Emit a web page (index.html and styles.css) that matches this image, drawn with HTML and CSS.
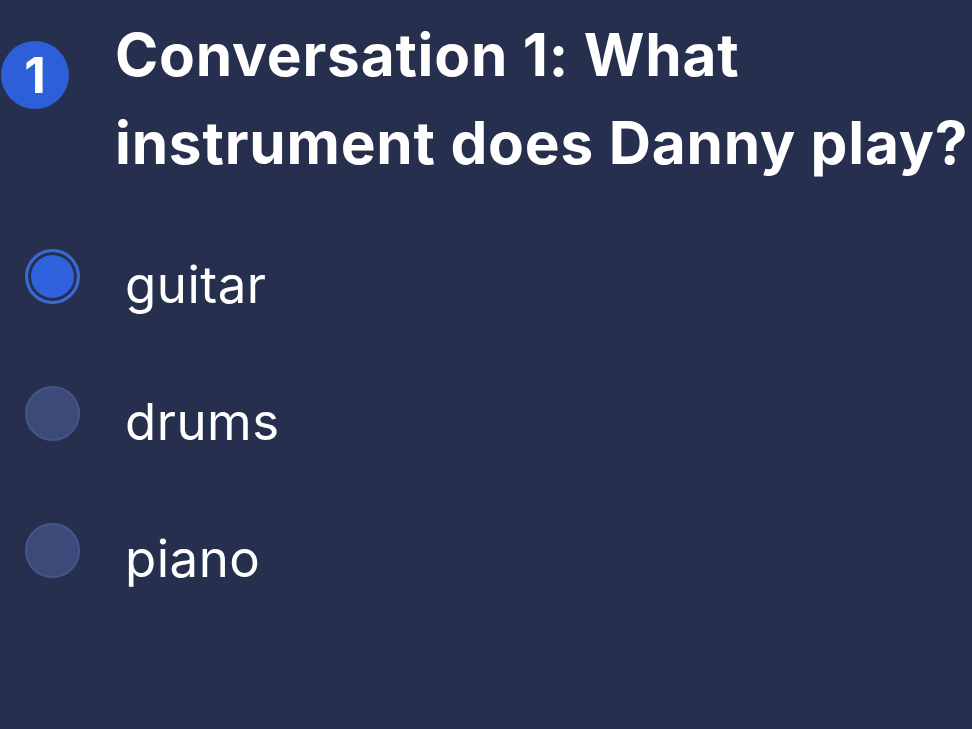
FILE: index.html
```html
<!DOCTYPE html>
<html lang="en">
<head>
    <meta charset="UTF-8">
    <meta name="viewport" content="width=device-width, initial-scale=1.0">
    <title>Quiz</title>
    <link rel="stylesheet" href="styles.css">
</head>
<body>
    <div class="question">
        <div class="question-head">
            <div class="badge">1</div>
            <h1 class="question-title">Conversation 1: What instrument does Danny play?</h1>
        </div>

        <div class="options">
            <label class="option">
                <span class="radio selected"></span>
                <span class="option-text">guitar</span>
            </label>
            <label class="option">
                <span class="radio"></span>
                <span class="option-text">drums</span>
            </label>
            <label class="option">
                <span class="radio"></span>
                <span class="option-text">piano</span>
            </label>
        </div>
    </div>
</body>
</html>
```

FILE: styles.css
```css
body {
    font-family: Inter, "Noto Sans", sans-serif;
    margin: 0;
    padding: 0;
    min-height: 100vh;
    background-color: #262f4d;
    color: #ffffff;
}

.question {
    padding: 11px 0 40px 1px;
}

.question-head {
    display: flex;
    align-items: flex-start;
}

.badge {
    width: 68px;
    height: 68px;
    margin-top: 30px;
    flex-shrink: 0;
    border-radius: 50%;
    background: #2d5fd8;
    display: flex;
    align-items: center;
    justify-content: center;
    font-size: 50px;
    font-weight: 700;
    color: #ffffff;
}

.question-title {
    flex: 1;
    min-width: 0;
    margin: 0 0 0 46px;
    font-size: 58.5px;
    font-weight: 700;
    line-height: 88px;
    letter-spacing: 0.8px;
}

.options {
    display: flex;
    flex-direction: column;
    gap: 82px;
    margin-top: 62px;
}

.option {
    display: flex;
    align-items: center;
    height: 55px;
    padding-left: 24px;
}

.radio {
    width: 55px;
    height: 55px;
    box-sizing: border-box;
    border-radius: 50%;
    background: #3b4a78;
    border: 2px solid #45568b;
    flex-shrink: 0;
}

.radio.selected {
    background: #2f62dc;
    border: 3px solid #3d68d2;
    box-shadow: inset 0 0 0 3px #262f4d;
}

.option-text {
    margin-left: 45px;
    padding-top: 16px;
    font-size: 51px;
    line-height: 62px;
    font-weight: 400;
    letter-spacing: 0.5px;
}
```
